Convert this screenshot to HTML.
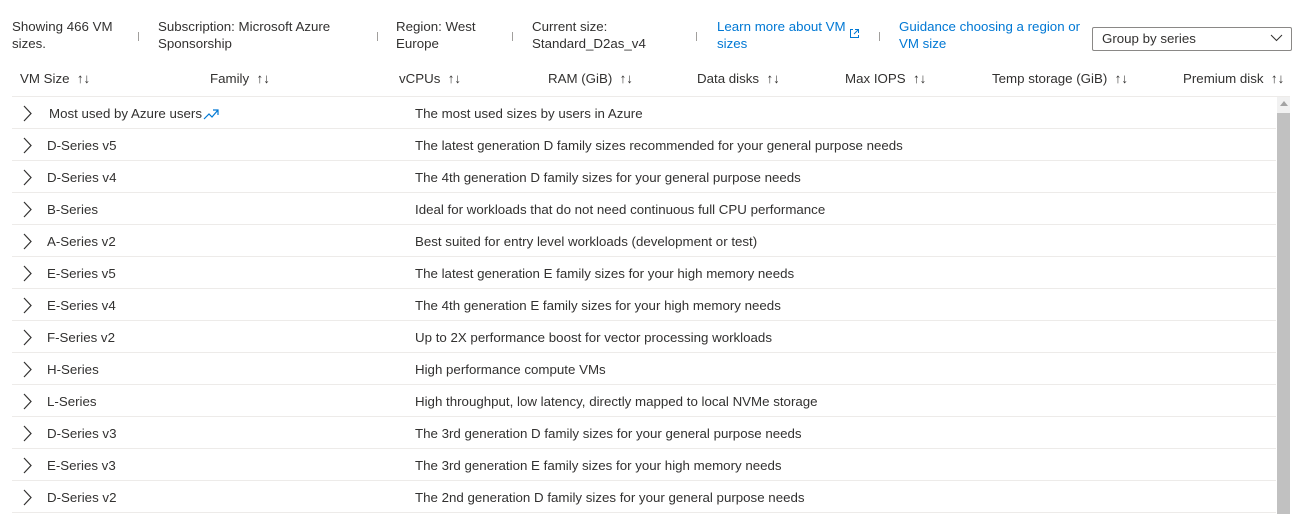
<html><head><style>
body{margin:0;width:1302px;height:514px;overflow:hidden;background:#fff;font-family:"Liberation Sans",sans-serif;font-size:13.3px;color:#323130;position:relative}
.a{position:absolute;line-height:17px;white-space:nowrap}
.sep{position:absolute;width:1px;height:9px;background:#a19f9d}
.l{color:#0078d4}
.h{position:absolute;top:70px;line-height:17px;white-space:nowrap}
.row{position:absolute;left:12px;width:1264px;height:31px;border-bottom:1px solid #edebe9}
.row svg{position:absolute;left:10px;top:8px}
.row .n{position:absolute;left:35px;top:8px;line-height:17px}
.row .d{position:absolute;left:403px;top:8px;line-height:17px}
</style></head><body>
<div class="a" style="left:12px;top:18px">Showing 466 VM<br>sizes.</div>
<div class="sep" style="left:138px;top:32px"></div>
<div class="a" style="left:158px;top:18px">Subscription: Microsoft Azure<br>Sponsorship</div>
<div class="sep" style="left:377px;top:32px"></div>
<div class="a" style="left:396px;top:18px">Region: West<br>Europe</div>
<div class="sep" style="left:512px;top:32px"></div>
<div class="a" style="left:532px;top:18px">Current size:<br>Standard_D2as_v4</div>
<div class="sep" style="left:696px;top:32px"></div>
<div class="a l" style="left:717px;top:18px">Learn more about VM<br>sizes</div>
<svg style="position:absolute;left:849px;top:28px" width="11" height="11" viewBox="0 0 11 11" fill="none" stroke="#0078d4"><path d="M4 1.5H1.5v8h8V7M6 1.5h3.5V5M9.5 1.5L5 6"/></svg>
<div class="sep" style="left:879px;top:32px"></div>
<div class="a l" style="left:899px;top:18px">Guidance choosing a region or<br>VM size</div>
<div style="position:absolute;left:1092px;top:27px;width:198px;height:22px;border:1px solid #8a8886;border-radius:2px"><span style="position:absolute;left:9px;top:3px">Group by series</span>
<svg style="position:absolute;right:8px;top:6px" width="13" height="8" viewBox="0 0 13 8" fill="none" stroke="#323130"><path d="M1 1l5.5 5.5L12 1"/></svg></div>
<div class="h" style="left:20px">VM Size &nbsp;↑↓</div>
<div class="h" style="left:210px">Family &nbsp;↑↓</div>
<div class="h" style="left:399px">vCPUs &nbsp;↑↓</div>
<div class="h" style="left:548px">RAM (GiB) &nbsp;↑↓</div>
<div class="h" style="left:697px">Data disks &nbsp;↑↓</div>
<div class="h" style="left:845px">Max IOPS &nbsp;↑↓</div>
<div class="h" style="left:992px">Temp storage (GiB) &nbsp;↑↓</div>
<div class="h" style="left:1183px">Premium disk &nbsp;↑↓</div>
<div style="position:absolute;left:12px;top:96px;width:1278px;height:1px;background:#edebe9"></div>
<div style="position:absolute;left:1277px;top:97px;width:13px;height:417px;background:#f1f1f1"></div>
<div style="position:absolute;left:1280px;top:101px;width:0;height:0;border-left:4px solid transparent;border-right:4px solid transparent;border-bottom:5px solid #a3a3a3"></div>
<div style="position:absolute;left:1277px;top:113px;width:13px;height:401px;background:#c1c1c1"></div>
<div id="rows"></div>
<script>
var r=[["Most used by Azure users","The most used sizes by users in Azure"],["D-Series v5","The latest generation D family sizes recommended for your general purpose needs"],["D-Series v4","The 4th generation D family sizes for your general purpose needs"],["B-Series","Ideal for workloads that do not need continuous full CPU performance"],["A-Series v2","Best suited for entry level workloads (development or test)"],["E-Series v5","The latest generation E family sizes for your high memory needs"],["E-Series v4","The 4th generation E family sizes for your high memory needs"],["F-Series v2","Up to 2X performance boost for vector processing workloads"],["H-Series","High performance compute VMs"],["L-Series","High throughput, low latency, directly mapped to local NVMe storage"],["D-Series v3","The 3rd generation D family sizes for your general purpose needs"],["E-Series v3","The 3rd generation E family sizes for your high memory needs"],["D-Series v2","The 2nd generation D family sizes for your general purpose needs"]];
var h="";r.forEach(function(x,i){var n=x[0];if(i==0)n='<span style="margin-left:2px">'+n+'</span><svg style="position:static;vertical-align:-2px;margin-left:1px" width="16" height="12" viewBox="0 0 16 12" fill="none" stroke="#0078d4" stroke-width="1.2"><path d="M1 11l5-5 3 3 6-7M10 2h5v5"/></svg>';
h+='<div class="row" style="top:'+(97+i*32)+'px"><svg width="10" height="17" viewBox="0 0 10 17" fill="none" stroke="#323130" stroke-width="1.2"><path d="M2 1l7 7.5L2 16"/></svg><span class="n">'+n+'</span><span class="d">'+x[1]+'</span></div>';});
document.getElementById("rows").innerHTML=h;
</script>
</body></html>
